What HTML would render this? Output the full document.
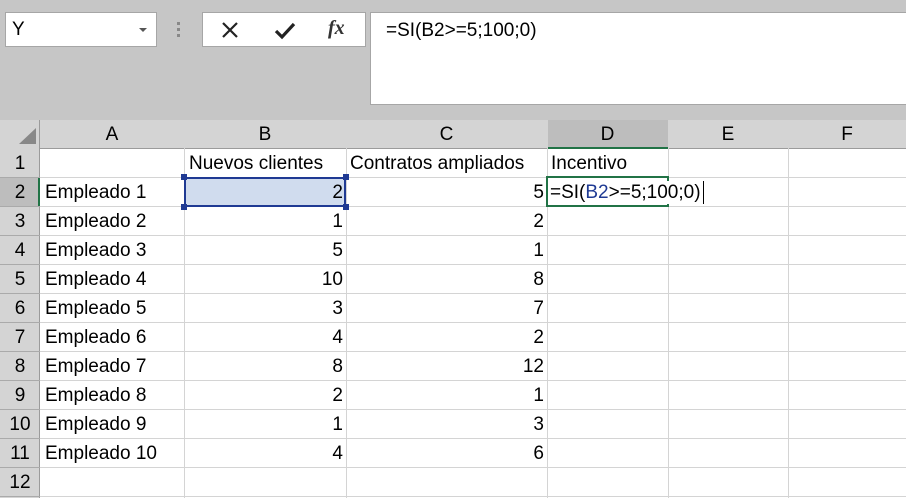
<!DOCTYPE html>
<html><head><style>
*{margin:0;padding:0;box-sizing:border-box}
body{width:906px;height:498px;overflow:hidden;background:#c6c6c6;font-family:"Liberation Sans",sans-serif;position:relative}
.abs{position:absolute}
.box{background:#fff;border:1px solid #a6a6a6}
.c{position:absolute;font-size:19px;color:#000;line-height:29px;white-space:nowrap}
.hl{position:absolute;background:#d4d4d4}
</style></head><body>
<div class="abs box" style="left:5px;top:12px;width:152px;height:35px"></div>
<div class="abs" style="left:12px;top:19px;font-size:19px">Y</div>
<div class="abs" style="left:139px;top:28px;width:0;height:0;border-left:4px solid transparent;border-right:4px solid transparent;border-top:4px solid #555"></div>
<div class="abs" style="left:177px;top:22px;width:3px;height:3px;background:#888;box-shadow:0 6px #888,0 12px #888"></div>
<div class="abs box" style="left:202px;top:12px;width:164px;height:35px"></div>
<svg class="abs" style="left:220px;top:20px" width="20" height="20"><path d="M3 3L17 17M17 3L3 17" stroke="#222" stroke-width="2.2"/></svg>
<svg class="abs" style="left:274px;top:20px" width="22" height="20"><path d="M2 11L8 17L20 4" stroke="#222" stroke-width="3.2" fill="none"/></svg>
<div class="abs" style="left:328px;top:17px;font-family:'Liberation Serif',serif;font-style:italic;font-weight:bold;font-size:20px;color:#333">fx</div>
<div class="abs box" style="left:370px;top:12px;width:540px;height:93px"></div>
<div class="abs" style="left:386px;top:20px;font-size:19px">=SI(B2&gt;=5;100;0)</div>

<div class="abs" style="left:0;top:120px;width:906px;height:378px;background:#fff"></div>
<div class="abs" style="left:0;top:120px;width:906px;height:29px;background:#d4d4d4;border-bottom:1px solid #9b9b9b"></div>
<div class="abs" style="left:0;top:120px;width:40px;height:378px;background:#d4d4d4;border-right:1px solid #9b9b9b"></div>
<svg class="abs" style="left:16px;top:126px" width="22" height="20"><path d="M20 2L20 18L3 18Z" fill="#888"/></svg>
<div class="abs" style="left:547px;top:120px;width:121px;height:29px;background:#bdbdbd;border-bottom:2px solid #217346"></div>
<div class="abs" style="left:0;top:177px;width:40px;height:29px;background:#bdbdbd;border-right:2px solid #217346"></div>
<div id="g"></div>
<div class="abs" style="left:184px;top:177px;width:162px;height:30px;background:#d0dcee;border:2px solid #1f3a93"></div>
<div class="abs" style="left:181px;top:174px;width:6px;height:6px;background:#1f3a93;box-shadow:162px 0 #1f3a93,0 30px #1f3a93,162px 30px #1f3a93"></div>
<div class="abs" style="left:546px;top:176px;width:123px;height:31px;border:2px solid #217346;background:#fff"></div>
<script>
var cols=[40,184,346,547,668,788,906],names=["A","B","C","D","E","F"],h="";
for(var i=0;i<6;i++){h+='<div class="hl" style="left:'+cols[i+1]+'px;top:120px;width:1px;height:378px"></div>';
h+='<div class="c" style="left:'+cols[i]+'px;top:120px;width:'+(cols[i+1]-cols[i])+'px;text-align:center">'+names[i]+'</div>';}
for(var r=1;r<=12;r++){var t=149+29*(r-1);h+='<div class="hl" style="left:40px;top:'+(t+28)+'px;width:866px;height:1px"></div>';
h+='<div class="hl" style="left:0;top:'+(t+28)+'px;width:40px;height:1px;background:#aaa"></div>';
h+='<div class="c" style="left:0;top:'+t+'px;width:40px;text-align:center">'+r+'</div>';}
var B=[2,1,5,10,3,4,8,2,1,4],C=[5,2,1,8,7,2,12,1,3,6];
for(var k=0;k<10;k++){var t=178+29*k;
h+='<div class="c" style="left:45px;top:'+t+'px;z-index:2">Empleado '+(k+1)+'</div>';
h+='<div class="c" style="left:184px;top:'+t+'px;width:159px;text-align:right;z-index:2">'+B[k]+'</div>';
h+='<div class="c" style="left:346px;top:'+t+'px;width:198px;text-align:right;z-index:2">'+C[k]+'</div>';}
h+='<div class="c" style="left:189px;top:149px">Nuevos clientes</div><div class="c" style="left:350px;top:149px">Contratos ampliados</div><div class="c" style="left:551px;top:149px">Incentivo</div>';
h+='<div class="c" style="left:550px;top:178px;z-index:3;background:#fff;padding-right:2px;border-right:1px solid #000;line-height:23px;margin-top:3px">=SI(<span style="color:#1f3a93">B2</span>&gt;=5;100;0)</div>';
document.getElementById('g').innerHTML=h;
</script>
</body></html>
